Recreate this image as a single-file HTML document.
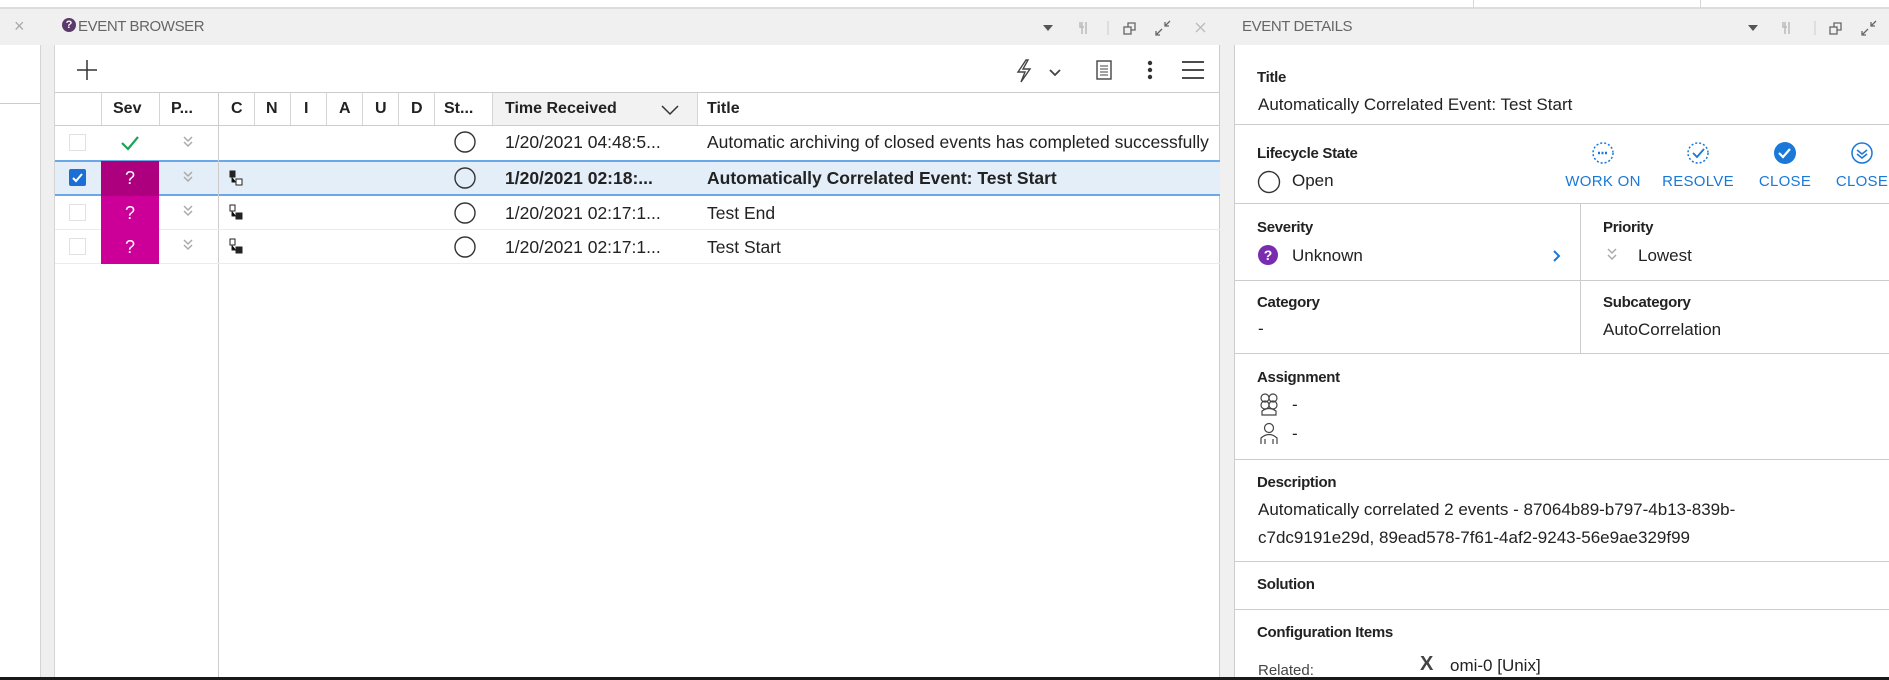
<!DOCTYPE html>
<html><head><meta charset="utf-8"><style>
*{box-sizing:border-box;margin:0;padding:0}
body{width:1889px;height:680px;overflow:hidden;background:#f0f0f0;font-family:"Liberation Sans",sans-serif;color:#222;position:relative}
.a{position:absolute}
.t{white-space:nowrap}
.hdr{font-size:15px;color:#666;letter-spacing:-0.4px}
.lbl{font-weight:bold;font-size:15px;color:#222;letter-spacing:-0.3px}
.val{font-size:17px;color:#222}
.hl{background:#ccc;height:1px}
.vl{background:#d6d6d6;width:1px}
.cell{font-size:17.5px;position:absolute;white-space:nowrap}
.th{font-weight:bold;font-size:16px;position:absolute;top:100px}
.btn{color:#1a78d8;font-size:15px;position:absolute;top:173px;letter-spacing:0.3px;text-align:center;width:100px}
</style></head><body>
<div class="a" style="left:0;top:0;width:1889px;height:9px;background:#fff;border-bottom:2px solid #ddd"></div>
<div class="a vl" style="left:1473px;top:0;height:8px"></div>
<div class="a vl" style="left:1700px;top:0;height:8px"></div>
<div class="a t" style="left:14px;top:16px;color:#aaa;font-size:18px">×</div>
<div class="a" style="left:0;top:45px;width:40px;height:632px;background:#fff"></div>
<div class="a hl" style="left:0;top:103px;width:40px"></div>
<div class="a" style="left:40px;top:45px;width:15px;height:632px;background:#efefef;border-left:1px solid #d4d4d4;border-right:1px solid #d4d4d4"></div>
<div class="a" style="left:62px;top:18px;width:14px;height:14px;border-radius:50%;background:#5a3a6a;color:#fff;font-size:11px;font-weight:bold;text-align:center;line-height:14px">?</div>
<div class="a t hdr" style="left:78px;top:18px">EVENT BROWSER</div>
<svg class="a" style="left:1040px;top:18px" width="175" height="20" viewBox="0 0 175 20">
<path d="M3 7h10l-5 6z" fill="#555"/>
<path d="M42 4v12M46 4v12M40 4v5h4" stroke="#bbb" stroke-width="1.5" fill="none"/>
<path d="M68 3v14" stroke="#ccc"/>
<rect x="84" y="9" width="7" height="7" fill="none" stroke="#666" stroke-width="1.3"/><path d="M88 9V5h7v7h-4" fill="none" stroke="#666" stroke-width="1.3"/>
<path d="M116 17l6-6M116 13v4h4M130 3l-5 5M125 4v4h4" stroke="#666" stroke-width="1.3" fill="none"/>
<path d="M156 5l9 9M165 5l-9 9" stroke="#bbb" stroke-width="1.3"/>
</svg>
<div class="a" style="left:55px;top:45px;width:1165px;height:632px;background:#fff;border-right:1px solid #ccc"></div>
<svg class="a" style="left:76px;top:59px" width="22" height="22"><path d="M11 1v20M1 11h20" stroke="#333" stroke-width="1.5"/></svg>
<svg class="a" style="left:1010px;top:58px" width="200" height="26" viewBox="0 0 200 26">
<path d="M16 2l-8 12h7l-4 10 9-13h-7l5-9z" fill="none" stroke="#444" stroke-width="1.4"/>
<path d="M40 12l5 5 5-5" fill="none" stroke="#444" stroke-width="1.8"/>
<rect x="87" y="3" width="14" height="18" fill="none" stroke="#444" stroke-width="1.4"/><path d="M90 8h8M90 11h8M90 14h8M90 17h8" stroke="#444"/>
<circle cx="140" cy="5" r="2.2" fill="#333"/><circle cx="140" cy="12" r="2.2" fill="#333"/><circle cx="140" cy="19" r="2.2" fill="#333"/>
<path d="M172 4h22M172 12h22M172 20h22" stroke="#333" stroke-width="1.8"/>
</svg>
<div class="a hl" style="left:55px;top:92px;width:1165px"></div>
<div class="a hl" style="left:55px;top:125px;width:1165px"></div>
<div class="a" style="left:492px;top:93px;width:205px;height:32px;background:#f2f2f2"></div>
<div class="a vl" style="left:101px;top:93px;height:32px"></div>
<div class="a vl" style="left:159px;top:93px;height:32px"></div>
<div class="a vl" style="left:218px;top:93px;height:584px;background:#ccc"></div>
<div class="a vl" style="left:254px;top:93px;height:32px"></div>
<div class="a vl" style="left:290px;top:93px;height:32px"></div>
<div class="a vl" style="left:326px;top:93px;height:32px"></div>
<div class="a vl" style="left:362px;top:93px;height:32px"></div>
<div class="a vl" style="left:398px;top:93px;height:32px"></div>
<div class="a vl" style="left:434px;top:93px;height:32px"></div>
<div class="a vl" style="left:492px;top:93px;height:32px"></div>
<div class="a vl" style="left:697px;top:93px;height:32px"></div>
<div class="th" style="left:113px">Sev</div>
<div class="th" style="left:171px">P...</div>
<div class="th" style="left:231px">C</div>
<div class="th" style="left:266px">N</div>
<div class="th" style="left:304px">I</div>
<div class="th" style="left:339px">A</div>
<div class="th" style="left:375px">U</div>
<div class="th" style="left:411px">D</div>
<div class="th" style="left:444px">St...</div>
<div class="th" style="left:505px">Time Received</div>
<svg class="a" style="left:660px;top:103px" width="20" height="14"><path d="M2 3l8 8 8-8" fill="none" stroke="#333" stroke-width="1.5"/></svg>
<div class="th" style="left:707px">Title</div>
<div class="a" style="left:55px;top:160px;width:1165px;height:36px;background:#e3eef9;border-top:2px solid #6aa8e8;border-bottom:2px solid #6aa8e8"></div>
<div class="a hl" style="left:55px;top:229px;width:1165px;background:#ececec"></div>
<div class="a hl" style="left:55px;top:263px;width:1165px;background:#ececec"></div>
<div class="a vl" style="left:218px;top:160px;height:36px;background:#ccc"></div>
<div class="a" style="left:69px;top:134px;width:17px;height:17px;border:1px solid #e2e2e2"></div>
<div class="a" style="left:69px;top:169px;width:17px;height:17px;background:#1a6fd6;border-radius:2px"></div>
<svg class="a" style="left:69px;top:169px" width="17" height="17"><path d="M4 9l3 3 6-7" fill="none" stroke="#fff" stroke-width="2"/></svg>
<div class="a" style="left:69px;top:204px;width:17px;height:17px;border:1px solid #e2e2e2"></div>
<div class="a" style="left:69px;top:238px;width:17px;height:17px;border:1px solid #e2e2e2"></div>
<svg class="a" style="left:120px;top:134px" width="20" height="18"><path d="M2 9l6 6 10-12" fill="none" stroke="#1aa35a" stroke-width="2.2"/></svg>
<div class="a" style="left:101px;top:161px;width:58px;height:35px;background:#ad007e;color:#fff;font-size:18px;text-align:center;line-height:35px">?</div>
<div class="a" style="left:101px;top:196px;width:58px;height:34px;background:#cc0099;color:#fff;font-size:18px;text-align:center;line-height:34px">?</div>
<div class="a" style="left:101px;top:230px;width:58px;height:34px;background:#cc0099;color:#fff;font-size:18px;text-align:center;line-height:34px">?</div>
<svg class="a" style="left:182px;top:135px" width="12" height="150"><g fill="none" stroke="#aaa" stroke-width="1.5"><path d="M2 2l4 4 4-4M2 7l4 4 4-4"/><path d="M2 37l4 4 4-4M2 42l4 4 4-4"/><path d="M2 71l4 4 4-4M2 76l4 4 4-4"/><path d="M2 105l4 4 4-4M2 110l4 4 4-4"/></g></svg>
<svg class="a" style="left:229px;top:170px" width="16" height="90"><g stroke="#222" stroke-width="1"><rect x="1" y="1" width="5" height="6" fill="#222"/><path d="M3 7v5h4"/><rect x="7" y="9" width="6" height="6" fill="#fff"/>
<rect x="1" y="35" width="5" height="6" fill="#fff"/><path d="M3 41v5h4"/><rect x="7" y="43" width="6" height="6" fill="#222"/>
<rect x="1" y="69" width="5" height="6" fill="#fff"/><path d="M3 75v5h4"/><rect x="7" y="77" width="6" height="6" fill="#222"/></g></svg>
<svg class="a" style="left:452px;top:131px" width="26" height="130"><g fill="none" stroke="#333" stroke-width="1.4"><circle cx="13" cy="11" r="10"/><circle cx="13" cy="47" r="10"/><circle cx="13" cy="82" r="10"/><circle cx="13" cy="116" r="10"/></g></svg>
<div class="cell" style="left:505px;top:132px">1/20/2021 04:48:5...</div>
<div class="cell" style="left:505px;top:168px;font-weight:bold">1/20/2021 02:18:...</div>
<div class="cell" style="left:505px;top:203px">1/20/2021 02:17:1...</div>
<div class="cell" style="left:505px;top:237px">1/20/2021 02:17:1...</div>
<div class="a" style="left:707px;top:132px;width:512px;height:26px;overflow:hidden"><div class="cell" style="position:static">Automatic archiving of closed events has completed successfully</div></div>
<div class="cell" style="left:707px;top:168px;font-weight:bold">Automatically Correlated Event: Test Start</div>
<div class="cell" style="left:707px;top:203px">Test End</div>
<div class="cell" style="left:707px;top:237px">Test Start</div>

<div class="a t hdr" style="left:1242px;top:18px">EVENT DETAILS</div>
<svg class="a" style="left:1745px;top:18px" width="144" height="20" viewBox="0 0 144 20">
<path d="M3 7h10l-5 6z" fill="#555"/>
<path d="M40 4v12M44 4v12M38 4v5h4" stroke="#bbb" stroke-width="1.5" fill="none"/>
<path d="M70 3v14" stroke="#ccc"/>
<rect x="85" y="9" width="7" height="7" fill="none" stroke="#666" stroke-width="1.3"/><path d="M89 9V5h7v7h-4" fill="none" stroke="#666" stroke-width="1.3"/>
<path d="M117 17l6-6M117 13v4h4M131 3l-5 5M126 4v4h4" stroke="#666" stroke-width="1.3" fill="none"/>
</svg>
<div class="a" style="left:1234px;top:45px;width:655px;height:632px;background:#fff;border-left:1px solid #ccc"></div>
<div class="a t lbl" style="left:1257px;top:69px">Title</div>
<div class="a t val" style="left:1258px;top:95px">Automatically Correlated Event: Test Start</div>
<div class="a hl" style="left:1235px;top:124px;width:654px"></div>
<div class="a t lbl" style="left:1257px;top:145px">Lifecycle State</div>
<svg class="a" style="left:1257px;top:170px" width="24" height="24"><circle cx="12" cy="12" r="10.5" fill="none" stroke="#333" stroke-width="1.4"/></svg>
<div class="a t val" style="left:1292px;top:171px">Open</div>
<svg class="a" style="left:1590px;top:142px" width="299" height="24">
<circle cx="13" cy="11" r="10" fill="none" stroke="#1a78d8" stroke-width="1.5" stroke-dasharray="2 2"/><path d="M8 11h10" stroke="#1a78d8" stroke-width="2.5" stroke-dasharray="2 1.5"/>
<circle cx="108" cy="11" r="10" fill="none" stroke="#1a78d8" stroke-width="1.5" stroke-dasharray="2 2"/><path d="M103 11l4 4 7-8" fill="none" stroke="#1a78d8" stroke-width="1.8"/>
<circle cx="195" cy="11" r="11" fill="#1a78d8"/><path d="M189 11l4 4 7-8" fill="none" stroke="#fff" stroke-width="2.2"/>
<circle cx="272" cy="11" r="10" fill="none" stroke="#1a78d8" stroke-width="1.5"/><path d="M267 8l5 4 5-4M267 12l5 4 5-4" fill="none" stroke="#1a78d8" stroke-width="1.5"/>
</svg>
<div class="btn t" style="left:1553px">WORK ON</div>
<div class="btn t" style="left:1648px">RESOLVE</div>
<div class="btn t" style="left:1735px">CLOSE</div>
<div class="btn t" style="left:1812px">CLOSE</div>
<div class="a hl" style="left:1235px;top:203px;width:654px"></div>
<div class="a vl" style="left:1580px;top:203px;height:150px;background:#ccc"></div>
<div class="a t lbl" style="left:1257px;top:219px">Severity</div>
<div class="a" style="left:1258px;top:245px;width:20px;height:20px;border-radius:50%;background:#7a2cb0;color:#fff;font-size:14px;font-weight:bold;text-align:center;line-height:20px">?</div>
<div class="a t val" style="left:1292px;top:246px">Unknown</div>
<svg class="a" style="left:1552px;top:249px" width="10" height="14"><path d="M2 2l5 5-5 5" fill="none" stroke="#1a78d8" stroke-width="2"/></svg>
<div class="a t lbl" style="left:1603px;top:219px">Priority</div>
<svg class="a" style="left:1606px;top:247px" width="12" height="16"><path d="M2 2l4 4 4-4M2 8l4 4 4-4" fill="none" stroke="#aaa" stroke-width="1.5"/></svg>
<div class="a t val" style="left:1638px;top:246px">Lowest</div>
<div class="a hl" style="left:1235px;top:280px;width:654px"></div>
<div class="a t lbl" style="left:1257px;top:294px">Category</div>
<div class="a t val" style="left:1258px;top:319px">-</div>
<div class="a t lbl" style="left:1603px;top:294px">Subcategory</div>
<div class="a t val" style="left:1603px;top:320px">AutoCorrelation</div>
<div class="a hl" style="left:1235px;top:353px;width:654px"></div>
<div class="a t lbl" style="left:1257px;top:369px">Assignment</div>
<svg class="a" style="left:1258px;top:393px" width="22" height="60"><g fill="none" stroke="#444" stroke-width="1.2"><circle cx="7" cy="5" r="4"/><circle cx="15" cy="5" r="4"/><circle cx="7" cy="12" r="4"/><circle cx="15" cy="12" r="4"/><path d="M4 22v-4q7-5 14 0v4z"/><circle cx="11" cy="35" r="4.5"/><path d="M3 51v-6q8-7 16 0v6M7 46v5M15 46v5"/></g></svg>
<div class="a t val" style="left:1292px;top:395px">-</div>
<div class="a t val" style="left:1292px;top:424px">-</div>
<div class="a hl" style="left:1235px;top:459px;width:654px"></div>
<div class="a t lbl" style="left:1257px;top:474px">Description</div>
<div class="a t val" style="left:1258px;top:500px">Automatically correlated 2 events - 87064b89-b797-4b13-839b-</div>
<div class="a t val" style="left:1258px;top:528px">c7dc9191e29d, 89ead578-7f61-4af2-9243-56e9ae329f99</div>
<div class="a hl" style="left:1235px;top:561px;width:654px"></div>
<div class="a t lbl" style="left:1257px;top:576px">Solution</div>
<div class="a hl" style="left:1235px;top:609px;width:654px"></div>
<div class="a t lbl" style="left:1257px;top:624px">Configuration Items</div>
<div class="a t" style="left:1258px;top:662px;font-size:15px;color:#444">Related:</div>
<div class="a t" style="left:1420px;top:653px;font-size:20px;font-weight:bold;color:#444">X</div>
<div class="a t val" style="left:1450px;top:656px">omi-0 [Unix]</div>
<div class="a" style="left:0;top:677px;width:1889px;height:3px;background:#1a1a1a"></div>
</body></html>
